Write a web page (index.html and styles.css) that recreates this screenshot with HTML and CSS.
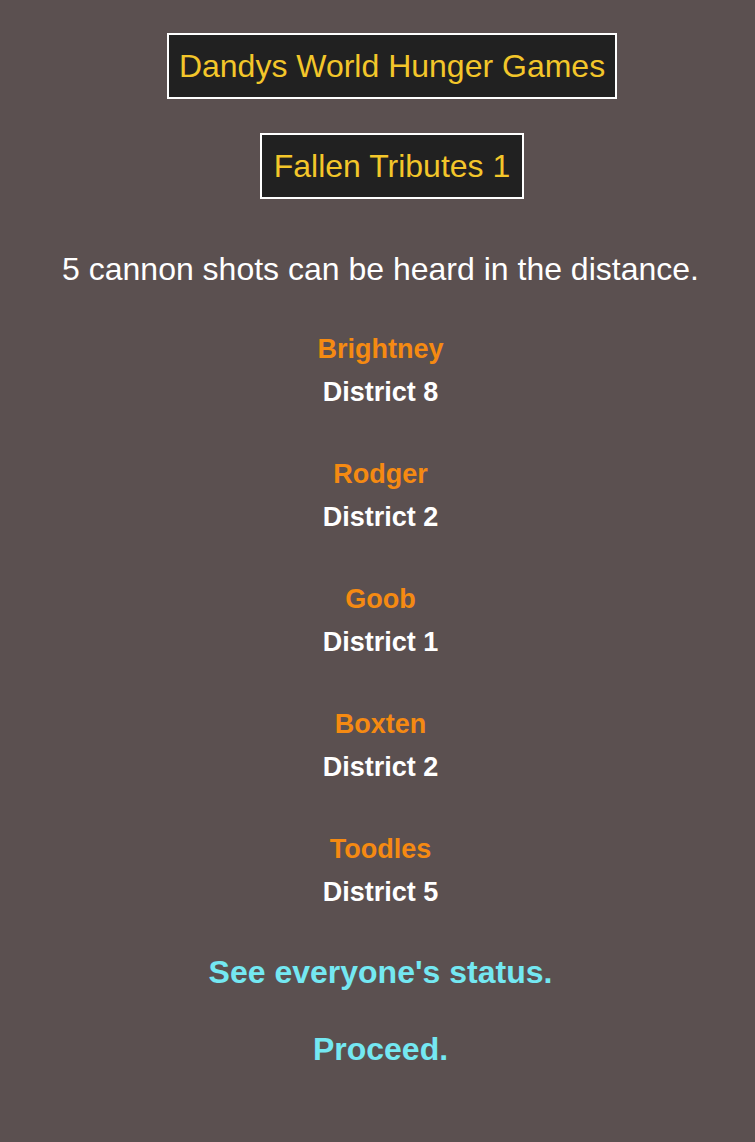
FILE: index.html
```html
<html>
<head>
    <meta charset="utf-8">
    <title>Dandys World Hunger Games</title>
    <link rel="stylesheet" href="styles.css">
</head>
<body>
<div class="page">
    <div class="heading">
        <span class="banner">Dandys World Hunger Games</span>
    </div>
    <div class="heading">
        <span class="banner banner-sub">Fallen Tributes 1</span>
    </div>
    <p class="intro">5 cannon shots can be heard in the distance.</p>
    <div class="fallen">
        <div class="tribute">
            <div class="name">Brightney</div>
            <div class="district">District 8</div>
        </div>
        <div class="tribute">
            <div class="name">Rodger</div>
            <div class="district">District 2</div>
        </div>
        <div class="tribute">
            <div class="name">Goob</div>
            <div class="district">District 1</div>
        </div>
        <div class="tribute">
            <div class="name">Boxten</div>
            <div class="district">District 2</div>
        </div>
        <div class="tribute">
            <div class="name">Toodles</div>
            <div class="district">District 5</div>
        </div>
    </div>
    <div class="links">
        <a class="link" href="#status">See everyone's status.</a>
        <a class="link" href="#proceed">Proceed.</a>
    </div>
</div>
</body>
</html>
```

FILE: styles.css
```css
body {
    margin: 0;
    background-color: #5b5050;
    --goldColor: #f3c62a;
    --orangeColor: #f58a12;
    --cyanColor: #74e8f2;
}

.page {
    font-family: "Liberation Sans", Arial, Helvetica, sans-serif;
    font-size: 32px;
    color: #fff;
    text-align: center;
    padding: 33px 0 40px 6px;
}

.heading {
    margin-bottom: 34px;
}

.banner {
    display: inline-block;
    margin-left: 23px;
    padding: 12px 10px;
    line-height: 38px;
    color: var(--goldColor);
    background-color: #212121;
    border: 2px solid #fff;
}

.banner-sub {
    padding: 12px 12px;
}

.intro {
    margin: 0 0 40px;
    padding-top: 18px;
    line-height: 37px;
}

.tribute {
    margin-bottom: 39px;
    font-size: 27px;
    font-weight: 700;
    line-height: 43px;
}

.tribute .name {
    color: var(--orangeColor);
}

.links {
    display: flex;
    flex-direction: column;
    align-items: center;
    gap: 40px;
    padding-top: 1px;
}

.link {
    font-weight: 700;
    line-height: 37px;
    color: var(--cyanColor);
    text-decoration: none;
}
```
